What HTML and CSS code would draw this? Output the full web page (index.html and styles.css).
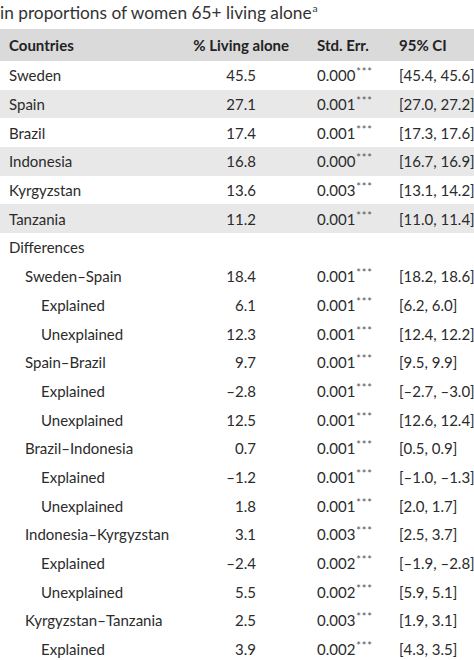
FILE: index.html
```html
<!DOCTYPE html>
<html>
<head>
<meta charset="utf-8">
<link rel="stylesheet" href="styles.css">
</head>
<body>
<div class="caption">in proportions of women 65+ living alone<sup class="fn">a</sup></div>
<table class="tbl">
<colgroup><col class="c1"><col class="c2"><col class="c3"><col class="c4"></colgroup>
<thead>
<tr class="head"><th class="name">Countries</th><th class="pct">% Living alone</th><th class="se">Std. Err.</th><th class="ci">95% CI</th></tr>
</thead>
<tbody>
<tr><td class="name">Sweden</td><td class="pct">45.5</td><td class="se">0.000<sup>***</sup></td><td class="ci">[45.4, 45.6]</td></tr>
<tr class="alt"><td class="name">Spain</td><td class="pct">27.1</td><td class="se">0.001<sup>***</sup></td><td class="ci">[27.0, 27.2]</td></tr>
<tr><td class="name">Brazil</td><td class="pct">17.4</td><td class="se">0.001<sup>***</sup></td><td class="ci">[17.3, 17.6]</td></tr>
<tr class="alt"><td class="name">Indonesia</td><td class="pct">16.8</td><td class="se">0.000<sup>***</sup></td><td class="ci">[16.7, 16.9]</td></tr>
<tr><td class="name">Kyrgyzstan</td><td class="pct">13.6</td><td class="se">0.003<sup>***</sup></td><td class="ci">[13.1, 14.2]</td></tr>
<tr class="alt"><td class="name">Tanzania</td><td class="pct">11.2</td><td class="se">0.001<sup>***</sup></td><td class="ci">[11.0, 11.4]</td></tr>
<tr><td class="name">Differences</td><td></td><td></td><td></td></tr>
<tr><td class="name l1">Sweden–Spain</td><td class="pct">18.4</td><td class="se">0.001<sup>***</sup></td><td class="ci">[18.2, 18.6]</td></tr>
<tr><td class="name l2">Explained</td><td class="pct">6.1</td><td class="se">0.001<sup>***</sup></td><td class="ci">[6.2, 6.0]</td></tr>
<tr><td class="name l2">Unexplained</td><td class="pct">12.3</td><td class="se">0.001<sup>***</sup></td><td class="ci">[12.4, 12.2]</td></tr>
<tr><td class="name l1">Spain–Brazil</td><td class="pct">9.7</td><td class="se">0.001<sup>***</sup></td><td class="ci">[9.5, 9.9]</td></tr>
<tr><td class="name l2">Explained</td><td class="pct">–2.8</td><td class="se">0.001<sup>***</sup></td><td class="ci">[–2.7, –3.0]</td></tr>
<tr><td class="name l2">Unexplained</td><td class="pct">12.5</td><td class="se">0.001<sup>***</sup></td><td class="ci">[12.6, 12.4]</td></tr>
<tr><td class="name l1">Brazil–Indonesia</td><td class="pct">0.7</td><td class="se">0.001<sup>***</sup></td><td class="ci">[0.5, 0.9]</td></tr>
<tr><td class="name l2">Explained</td><td class="pct">–1.2</td><td class="se">0.001<sup>***</sup></td><td class="ci">[–1.0, –1.3]</td></tr>
<tr><td class="name l2">Unexplained</td><td class="pct">1.8</td><td class="se">0.001<sup>***</sup></td><td class="ci">[2.0, 1.7]</td></tr>
<tr><td class="name l1">Indonesia–Kyrgyzstan</td><td class="pct">3.1</td><td class="se">0.003<sup>***</sup></td><td class="ci">[2.5, 3.7]</td></tr>
<tr><td class="name l2">Explained</td><td class="pct">–2.4</td><td class="se">0.002<sup>***</sup></td><td class="ci">[–1.9, –2.8]</td></tr>
<tr><td class="name l2">Unexplained</td><td class="pct">5.5</td><td class="se">0.002<sup>***</sup></td><td class="ci">[5.9, 5.1]</td></tr>
<tr><td class="name l1">Kyrgyzstan–Tanzania</td><td class="pct">2.5</td><td class="se">0.003<sup>***</sup></td><td class="ci">[1.9, 3.1]</td></tr>
<tr><td class="name l2">Explained</td><td class="pct">3.9</td><td class="se">0.002<sup>***</sup></td><td class="ci">[4.3, 3.5]</td></tr>
</tbody>
</table>
</body>
</html>
```
FILE: styles.css
```css
html, body {
  margin: 0;
  padding: 0;
  background: #fff;
  overflow: hidden;
}
body {
  width: 474px;
  height: 660px;
  font-family: Lato, "Liberation Sans", sans-serif;
  color: #2b2b2b;
  font-size: 15px;
}
.caption {
  height: 27px;
  padding-top: 2px;
  line-height: 22px;
  font-size: 17.3px;
  color: #333;
  white-space: nowrap;
}
.fn {
  font-size: 0.6em;
  vertical-align: 0.65em;
  line-height: 0;
  margin-left: 1px;
}
.tbl {
  border-collapse: collapse;
  table-layout: fixed;
  width: 480px;
}
.c1 { width: 190px; }
.c2 { width: 100px; }
.c3 { width: 100px; }
.c4 { width: 90px; }
.tbl th, .tbl td {
  padding: 0;
  white-space: nowrap;
  font-size: 15px;
}
.tbl tr { height: 28.7px; }
.tbl tr.head { height: 32px; background: #dadada; }
.tbl th { font-weight: 700; color: #222; text-align: left; }
.tbl tr.alt { background: #e8e8e8; }
.name { padding-left: 9px !important; text-align: left; }
.name.l1 { padding-left: 25px !important; }
.name.l2 { padding-left: 41px !important; }
td.pct { text-align: right; padding-right: 34px !important; }
th.pct { text-align: right; padding-right: 1px !important; }
.se { padding-left: 27px !important; text-align: left; }
.ci { padding-left: 9px !important; text-align: left; }
.se sup {
  font-size: 11px;
  vertical-align: 0.45em;
  line-height: 0;
  letter-spacing: 0.8px;
  margin-left: 1px;
  color: #555;
}
```
